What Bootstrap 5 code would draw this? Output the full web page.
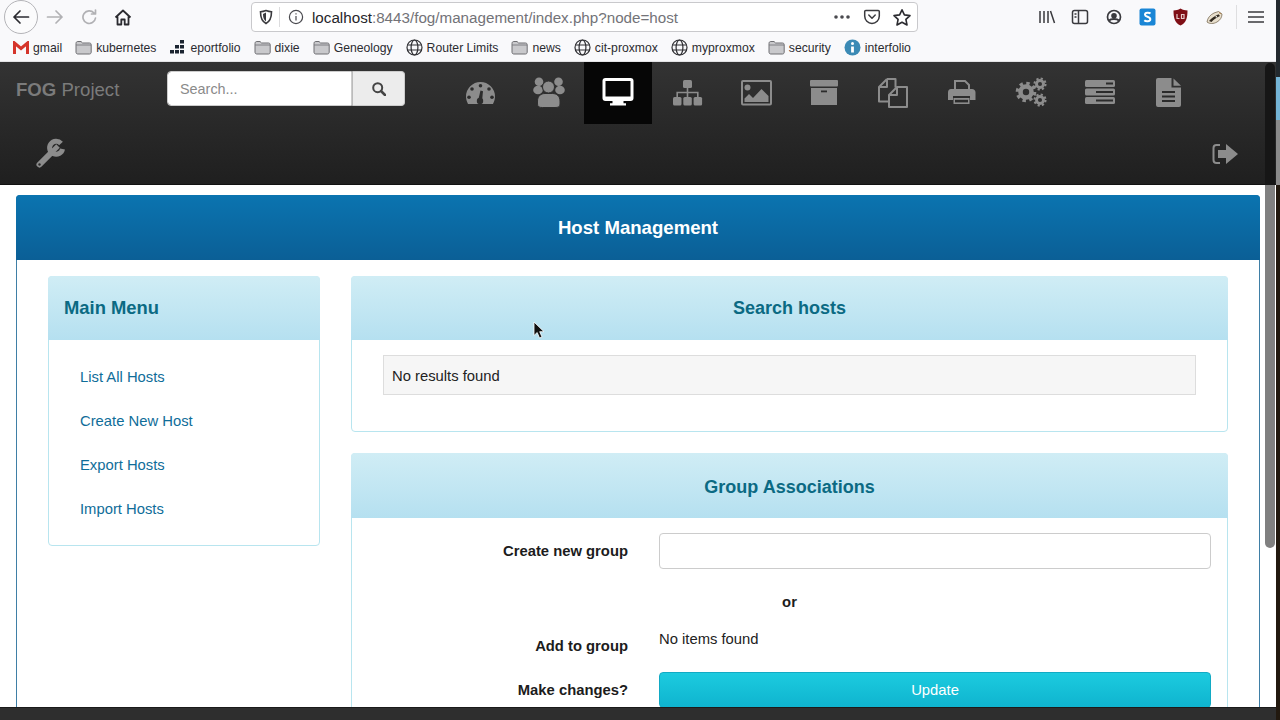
<!DOCTYPE html>
<html lang="en">
<head>
  <meta charset="UTF-8">
  <meta name="viewport" content="width=device-width, initial-scale=1.0">
  <title>FOG Project - Host Management</title>
  <link href="https://cdn.jsdelivr.net/npm/bootstrap@5.3.0/dist/css/bootstrap.min.css" rel="stylesheet">
  <style>
    html, body { height: 720px; overflow: hidden; }
    body { font-family: "Liberation Sans", Arial, sans-serif; font-size: 14.8px; color: #222; background: #fff; position: relative; }
    svg { display: block; flex: none; }

    /* browser chrome */
    .tool-row { height: 34px; background: #f9f9fb; padding-left: 4px; flex: none; }
    .back-circle { width: 34px; height: 34px; border: 1px solid #b4b4b8; border-radius: 50%; background: #fbfbfc; }
    .tool-btn { width: 34px; height: 34px; }
    .url-box { width: 667px; height: 30px; margin-left: 111px; margin-top: 2px; background: #fff; border: 1px solid #c9c9cc; border-radius: 4px; font-size: 15.2px; color: #737378; padding-left: 6px; padding-right: 5px; }
    .url-sep { width: 1px; height: 20px; background: #dcdcde; margin: 0 8px 0 5px; }
    .url-host { color: #26262a; }
    .url-text { padding-top: 2px; }
    .star-gap { margin-left: 11px; }
    .right-tools { margin-left: 112px; }
    .tool-cell { width: 33.5px; height: 34px; }
    .chrome-sep { width: 1px; height: 24px; background: #dedee0; margin: 0 11px 0 5px; }
    .marks-row { height: 28px; background: #f9f9fb; font-size: 12.2px; color: #2b2b30; padding: 1px 0 0 13px; border-bottom: 1px solid #e3e3e6; flex: none; }
    .mark-item { gap: 4px; margin-right: 13px; white-space: nowrap; }

    /* fog nav */
    .fog-nav { height: 123px; background: linear-gradient(#333 0%, #1f1f1f 100%); border-bottom: 1px solid #111; flex: none; }
    .fog-top { height: 62px; }
    .fog-brand { width: 167px; flex: none; padding-left: 16px; font-size: 18.6px; color: #7b7b7b; padding-bottom: 7px; }
    .fog-search { width: 238px; height: 35px; margin-top: 9px; flex: none; }
    .fog-search .form-control { height: 35px; font-size: 14.4px; border: 1px solid #ccc; border-radius: 4px 0 0 4px; color: #777; padding: 0 12px; }
    .fog-search .form-control::placeholder { color: #8a8a8a; }
    .fog-search .btn { width: 53px; height: 35px; background: #ececec; border: 1px solid #ccc; border-left: 1px solid #bbb; border-radius: 0 4px 4px 0; padding: 0; flex: none; }
    .fog-icons { margin-left: 41px; }
    .fog-cell { width: 68.8px; height: 62px; }
    .fog-cell.on { background: #060606; }
    .fog-bottom { height: 60px; padding: 0 42px 0 34px; }

    /* page */
    .page-wrap { flex: 1 1 auto; min-height: 0; overflow: hidden; padding: 10px 20px 0 16px; }
    .outer-panel { border: 1px solid #3f7fa6; border-bottom: 0; border-radius: 4px 4px 0 0; height: 600px; }
    .outer-head { height: 65px; margin: -1px -1px 0; padding-top: 1px; background: linear-gradient(#0b74b0, #0b5f96); border-radius: 4px 4px 0 0; color: #fff; font-size: 18.6px; font-weight: 700; }
    .outer-body { padding: 16px 31px 0; gap: 31px; }
    .side-col { width: 272px; flex: none; }
    .main-col { width: 877px; flex: none; }
    .soft-panel { border: 1px solid #b8e5ef; border-radius: 4px; background: #fff; }
    .soft-head { height: 64px; margin: -1px -1px 0; background: linear-gradient(#d0edf5, #b5e0f0); border-radius: 4px 4px 0 0; color: #0b6a83; font-size: 18px; font-weight: 700; }
    .side-title { font-size: 18.4px; }
    .side-link { display: block; height: 44px; line-height: 44px; padding-left: 31px; color: #0f6d99; text-decoration: none; }
    .side-list { padding: 15px 0 14px; }
    .empty-well { height: 40px; margin: 15px 31px 36px; background: #f6f6f6; border: 1px solid #ddd; padding: 2px 0 0 8px; }
    .second-panel { margin-top: 21px; height: 300px; }
    .second-panel .soft-head { height: 65px; padding-top: 3px; }
    .form-zone { padding: 15px 16px 0 0; }
    .lbl-col { width: 276px; flex: none; text-align: right; font-weight: 700; color: #1c1c1c; }
    .val-col { width: 552px; margin-left: 31px; flex: none; }
    .val-col .form-control { height: 36px; border: 1px solid #ccc; border-radius: 4px; }
    .or-line { height: 31px; margin: 18px -16px 1px 0; font-weight: 700; color: #1c1c1c; }
    .items-line { height: 53px; }
    .items-line .lbl-col { padding-top: 16px; }
    .items-line .val-col { padding-top: 9px; }
    .update-btn { display: block; width: 100%; height: 36px; padding: 0; color: #fff; font-size: 14.8px; border: 1px solid #12aac4; border-radius: 4px; background: linear-gradient(#1ccbdf, #0fb4cf); }

    /* bottom strip, scrollbar, pointer */
    .video-bar { height: 13px; background: #2e2e2e; border-top: 1px solid #1b1b1b; flex: none; }
    .scroll-lower { position: absolute; right: 5px; top: 185px; width: 10px; height: 363px; border-radius: 0 0 5px 5px; background: #808080; }
    .scroll-dark { position: absolute; right: 5px; top: 63px; width: 10px; height: 122px; border-radius: 5px 5px 0 0; background: #161616; }
    .edge-strip { position: absolute; right: 0; top: 0; width: 4px; height: 720px; background: linear-gradient(#23292e 0, #23292e 77px, #74b4d6 77px, #74b4d6 120px, #8a8a8a 120px, #8a8a8a 185px, #22190f 185px, #22190f 100%); }
    .pointer-mark { position: absolute; left: 533px; top: 321px; }
  </style>
</head>
<body class="d-flex flex-column">

  <svg width="0" height="0" class="position-absolute">
    <symbol id="ico-folder" viewBox="0 0 17 15">
      <path d="M1 3.500C1 2.300 1.600 1.500 2.800 1.500H6L7.600 3H14.500C15.600 3 16.200 3.700 16.200 4.800V12C16.200 13.200 15.600 14 14.500 14H2.800C1.600 14 1 13.200 1 12Z" fill="#c9c9cc" stroke="#6f6f73"/>
      <path d="M1.200 5H16" stroke="#6f6f73" stroke-width=".8"/>
    </symbol>
    <symbol id="ico-globe" viewBox="0 0 17 17">
      <g fill="none" stroke="#2f2f33" stroke-width="1.200"><circle cx="8.500" cy="8.500" r="7.500"/><ellipse cx="8.500" cy="8.500" rx="3.400" ry="7.500"/><path d="M1.500 6H15.500M1.500 11H15.500"/></g>
    </symbol>
    <symbol id="ico-gear" viewBox="-12 -12 24 24">
      <circle r="6" fill="none" stroke="#8c8c8c" stroke-width="5"/>
      <circle r="9.500" fill="none" stroke="#8c8c8c" stroke-width="3.500" stroke-dasharray="3.730 3.730"/>
    </symbol>
  </svg>

  <!-- browser toolbar -->
  <div class="tool-row d-flex">
    <div class="back-circle d-flex align-items-center justify-content-center">
      <svg width="18" height="16" viewBox="0 0 18 16" fill="none" stroke="#2b2b30" stroke-width="1.700" stroke-linecap="round" stroke-linejoin="round"><path d="M16.500 8H2M8 2L2 8L8 14"/></svg>
    </div>
    <div class="tool-btn d-flex align-items-center justify-content-center">
      <svg width="18" height="16" viewBox="0 0 18 16" fill="none" stroke="#b1b1b4" stroke-width="1.700" stroke-linecap="round" stroke-linejoin="round"><path d="M1.500 8H16M10 2L16 8L10 14"/></svg>
    </div>
    <div class="tool-btn d-flex align-items-center justify-content-center">
      <svg width="17" height="16" viewBox="0 0 17 16" fill="none" stroke="#b1b1b4" stroke-width="1.700" stroke-linecap="round" stroke-linejoin="round"><path d="M14.500 9A6.300 6.300 0 1 1 13 4M14.500 1V5H10.500"/></svg>
    </div>
    <div class="tool-btn d-flex align-items-center justify-content-center">
      <svg width="18" height="17" viewBox="0 0 18 17" fill="none" stroke="#2b2b30" stroke-width="1.800" stroke-linejoin="round"><path d="M1.500 8.500L9 1.500L16.500 8.500M3.500 7.500V15.500H7.300V10.500H10.700V15.500H14.500V7.500"/></svg>
    </div>
    <div class="url-box d-flex align-items-center">
      <svg width="16" height="16" viewBox="0 0 16 16" fill="none" stroke="#3a3a3e" stroke-width="1.600"><path d="M2.500 2.800C6 2.400 6.500 2 8 1.500C9.500 2 10 2.400 13.500 2.800C13.500 9 12 12.500 8 14.500C4 12.500 2.500 9 2.500 2.800Z"/><path d="M8 3.500V12.500C6 11 5 9 5 5Z" fill="#3a3a3e" stroke="none"/></svg>
      <span class="url-sep"></span>
      <svg width="16" height="16" viewBox="0 0 16 16" fill="none" stroke="#4a4a4f" stroke-width="1.200"><circle cx="8" cy="8" r="6.600"/><path d="M8 7V11.500M8 4.300V5.500"/></svg>
      <span class="url-text ms-2 flex-grow-1"><span class="url-host">localhost</span>:8443/fog/management/index.php?node=host</span>
      <svg class="me-2" width="18" height="6" viewBox="0 0 18 6" fill="#4a4a4f"><circle cx="3" cy="3" r="1.800"/><circle cx="9" cy="3" r="1.800"/><circle cx="15" cy="3" r="1.800"/></svg>
      <svg class="ms-1" width="18" height="18" viewBox="0 0 18 18" fill="none" stroke="#3a3a3e" stroke-width="1.500" stroke-linecap="round" stroke-linejoin="round"><path d="M2.800 2.500H15.200C15.900 2.500 16.300 3 16.300 3.600V8C16.300 12 13 15.500 9 15.500C5 15.500 1.700 12 1.700 8V3.600C1.700 3 2.100 2.500 2.800 2.500Z"/><path d="M5.800 7L9 10.200L12.200 7"/></svg>
      <svg class="star-gap" width="20" height="19" viewBox="0 0 20 19" fill="none" stroke="#2b2b30" stroke-width="1.600" stroke-linejoin="round"><path d="M10 1.800L12.400 6.900L18 7.600L13.900 11.400L15 17L10 14.200L5 17L6.100 11.400L2 7.600L7.600 6.900Z"/></svg>
    </div>
    <div class="right-tools d-flex align-items-center">
      <div class="tool-cell d-flex align-items-center justify-content-center">
        <svg width="18" height="16" viewBox="0 0 18 16" fill="none" stroke="#3a3a3e" stroke-width="1.500"><path d="M2 2V14M6 2V14M10 2V14M12.500 2L16.500 14"/></svg>
      </div>
      <div class="tool-cell d-flex align-items-center justify-content-center">
        <svg width="18" height="16" viewBox="0 0 18 16" fill="none" stroke="#3a3a3e" stroke-width="1.500"><rect x="1.500" y="1.500" width="15" height="13" rx="2"/><path d="M7.500 1.500V14.500M3.500 5H5.500M3.500 8H5.500"/></svg>
      </div>
      <div class="tool-cell d-flex align-items-center justify-content-center">
        <svg width="16" height="16" viewBox="0 0 16 16" fill="none" stroke="#3a3a3e" stroke-width="1.700"><circle cx="8" cy="8" r="6.500"/><circle cx="8" cy="6.800" r="2.800" fill="#3a3a3e" stroke="none"/><path d="M3 11.500C5 9.500 11 9.500 13 11.500" stroke-width="2"/></svg>
      </div>
      <div class="tool-cell d-flex align-items-center justify-content-center">
        <svg width="17" height="18" viewBox="0 0 17 18"><rect x=".5" y=".5" width="16" height="17" rx="2" fill="#1a86d6"/><path d="M11.500 5.500C10.500 4.500 6 4 6 6.700C6 9.300 11.300 8.300 11.300 11.200C11.300 13.800 6.500 13.500 5.300 12.300" fill="none" stroke="#fff" stroke-width="2"/></svg>
      </div>
      <div class="tool-cell d-flex align-items-center justify-content-center">
        <svg width="15" height="18" viewBox="0 0 15 18"><path d="M7.500 .5C10 2 12 2.300 14.500 2.500C14.500 10 13 15 7.500 17.500C2 15 .5 10 .5 2.500C3 2.300 5 2 7.500 .5Z" fill="#7f0f16"/><path d="M4 6V10.500H6.500M8.500 6.500H11V10.500H8.500Z" fill="none" stroke="#e8c9c9" stroke-width="1.200"/></svg>
      </div>
      <div class="tool-cell d-flex align-items-center justify-content-center">
        <svg width="17" height="15" viewBox="0 0 17 15"><path d="M1 12C1.500 8 4 5 8 3L12.500 1.500L16 4C16 7 14.500 10 11 12C7.500 14 3.500 14 1 12Z" fill="#e8dfcd" stroke="#6a5a42" stroke-width=".7"/><path d="M3 11C5.500 8.500 8.500 6 12.500 4.300L14 6C10.500 7.500 7.500 9.500 5.500 12Z" fill="#332b22"/><path d="M12.800 1.800L15.800 4L13.700 3.800Z" fill="#a8763c"/><circle cx="10.300" cy="6.800" r=".8" fill="#fff"/></svg>
      </div>
      <span class="chrome-sep"></span>
      <svg width="16" height="14" viewBox="0 0 16 14" stroke="#3a3a3e" stroke-width="1.600"><path d="M0 2H16M0 7H16M0 12H16"/></svg>
    </div>
  </div>

  <!-- bookmarks -->
  <div class="marks-row d-flex align-items-center">
    <div class="mark-item d-flex align-items-center">
      <svg width="16" height="13" viewBox="0 0 16 13" fill="none" stroke="#d5352b" stroke-width="3"><path d="M1.500 13V2L8 7.500L14.500 2V13"/></svg><span>gmail</span>
    </div>
    <div class="mark-item d-flex align-items-center"><svg width="17" height="15"><use href="#ico-folder"/></svg><span>kubernetes</span></div>
    <div class="mark-item d-flex align-items-center">
      <svg width="17" height="16" viewBox="0 0 17 16" fill="#1b2430"><rect x="11" y="0" width="4" height="3.500"/><rect x="11" y="5" width="4" height="3.500"/><rect x="6" y="5" width="4" height="3.500"/><rect x="1" y="10" width="4" height="3.500"/><rect x="6" y="10" width="4" height="3.500"/><rect x="11" y="10" width="4" height="3.500"/></svg><span>eportfolio</span>
    </div>
    <div class="mark-item d-flex align-items-center"><svg width="17" height="15"><use href="#ico-folder"/></svg><span>dixie</span></div>
    <div class="mark-item d-flex align-items-center"><svg width="17" height="15"><use href="#ico-folder"/></svg><span>Geneology</span></div>
    <div class="mark-item d-flex align-items-center"><svg width="17" height="17"><use href="#ico-globe"/></svg><span>Router Limits</span></div>
    <div class="mark-item d-flex align-items-center"><svg width="17" height="15"><use href="#ico-folder"/></svg><span>news</span></div>
    <div class="mark-item d-flex align-items-center"><svg width="17" height="17"><use href="#ico-globe"/></svg><span>cit-proxmox</span></div>
    <div class="mark-item d-flex align-items-center"><svg width="17" height="17"><use href="#ico-globe"/></svg><span>myproxmox</span></div>
    <div class="mark-item d-flex align-items-center"><svg width="17" height="15"><use href="#ico-folder"/></svg><span>security</span></div>
    <div class="mark-item d-flex align-items-center">
      <svg width="17" height="17" viewBox="0 0 17 17"><circle cx="8.500" cy="8.500" r="8" fill="#3b8ab5"/><circle cx="8.500" cy="4.500" r="1.500" fill="#fff"/><path d="M8.500 7.500V13.500" stroke="#fff" stroke-width="2.800"/></svg><span>interfolio</span>
    </div>
  </div>

  <!-- fog navigation -->
  <nav class="fog-nav">
    <div class="fog-top d-flex">
      <div class="fog-brand d-flex align-items-center"><span><b>FOG</b> Project</span></div>
      <form class="fog-search d-flex" onsubmit="return false">
        <input type="text" class="form-control" placeholder="Search...">
        <button class="btn d-flex align-items-center justify-content-center" type="button">
          <svg width="14" height="14" viewBox="0 0 14 14" fill="none" stroke="#444" stroke-width="2"><circle cx="5.700" cy="5.700" r="4.500"/><path d="M9 9L13 13" stroke-width="2.500" stroke-linecap="round"/></svg>
        </button>
      </form>
      <div class="fog-icons d-flex">
        <a class="fog-cell d-flex align-items-center justify-content-center" href="#">
          <svg width="32" height="32" viewBox="0 0 32 32"><path d="M4 27C2.500 24 2 21.500 2 19.500A14.500 14.500 0 0 1 31 19.500C31 21.500 30.500 24 29 27Z" fill="#8c8c8c"/><g fill="#2c2c2c"><circle cx="16.500" cy="8.700" r="1.800"/><circle cx="8" cy="12" r="1.800"/><circle cx="25" cy="12" r="1.800"/><circle cx="5" cy="20.300" r="1.800"/><circle cx="28" cy="20.300" r="1.800"/><circle cx="16" cy="24" r="3.200"/><path d="M16.500 13.500L19 14.200L18 24H14Z"/></g></svg>
        </a>
        <a class="fog-cell d-flex align-items-center justify-content-center" href="#">
          <svg width="32" height="32" viewBox="0 0 32 32" fill="#8c8c8c"><circle cx="6" cy="4.700" r="4.300"/><circle cx="25.500" cy="4.700" r="4.300"/><ellipse cx="5" cy="13" rx="4.800" ry="4.300"/><ellipse cx="27" cy="13" rx="4.800" ry="4.300"/><circle cx="15.500" cy="10" r="6" stroke="#2e2e2e"/><path d="M4.500 27V24C4.500 19 8 16.500 12 16.500H19.500C23.500 16.500 27 19 27 24V27C27 30 25 30.500 22 30.500H9.500C6.500 30.500 4.500 30 4.500 27Z" stroke="#2e2e2e"/></svg>
        </a>
        <a class="fog-cell on d-flex align-items-center justify-content-center" href="#">
          <svg width="32" height="32" viewBox="0 0 32 32"><rect x=".5" y="1" width="31" height="23" rx="3" fill="#fff"/><rect x="3.500" y="4" width="25" height="15.500" fill="#060606"/><path d="M10.500 24H21.500V26.200H24V28.500H8V26.200H10.500Z" fill="#fff"/></svg>
        </a>
        <a class="fog-cell d-flex align-items-center justify-content-center" href="#">
          <svg width="32" height="32" viewBox="0 0 32 32" fill="#8c8c8c"><rect x="12" y="3" width="9" height="8" rx="1.500"/><rect x="2" y="20" width="8.500" height="8.500" rx="1.500"/><rect x="12.300" y="20" width="8.500" height="8.500" rx="1.500"/><rect x="22.600" y="20" width="8.500" height="8.500" rx="1.500"/><path d="M16.500 10V20M6.200 20V15.500H26.800V20" fill="none" stroke="#8c8c8c" stroke-width="1.600"/></svg>
        </a>
        <a class="fog-cell d-flex align-items-center justify-content-center" href="#">
          <svg width="32" height="32" viewBox="0 0 32 32"><rect x="2" y="4" width="29" height="23.500" rx="1" fill="none" stroke="#8c8c8c" stroke-width="2"/><circle cx="7.500" cy="10.500" r="3" fill="#8c8c8c"/><path d="M4.500 25V21.500L9 17L13 21L21.500 12L28.500 19V25Z" fill="#8c8c8c"/></svg>
        </a>
        <a class="fog-cell d-flex align-items-center justify-content-center" href="#">
          <svg width="32" height="32" viewBox="0 0 32 32" fill="#8c8c8c"><rect x="2" y="3" width="28" height="6.500" rx="1"/><path d="M3 11H29V28H3Z"/><rect x="13" y="13.500" width="6" height="1.800" fill="#2b2b2b"/></svg>
        </a>
        <a class="fog-cell d-flex align-items-center justify-content-center" href="#">
          <svg width="32" height="32" viewBox="0 0 32 32" fill="none" stroke="#8c8c8c" stroke-width="2" stroke-linejoin="round"><path d="M10 2H18.500V10.500M10 2L2 10V24.500H12M10 2V10H2"/><path d="M20 10H30V30H12V18ZM20 10V18H12"/></svg>
        </a>
        <a class="fog-cell d-flex align-items-center justify-content-center" href="#">
          <svg width="32" height="32" viewBox="0 0 32 32"><path d="M9 13V4H19L23 8V13" fill="none" stroke="#8c8c8c" stroke-width="2"/><path d="M5 12H26C28 12 29.500 13.500 29.500 15.500V23H24V19H7V23H2V15.500C2 13.500 3 12 5 12Z" fill="#8c8c8c"/><rect x="7.500" y="21" width="16" height="6" fill="#8c8c8c"/><rect x="9" y="22.800" width="13" height="2.600" fill="#2b2b2b"/></svg>
        </a>
        <a class="fog-cell d-flex align-items-center justify-content-center" href="#">
          <svg width="32" height="32" viewBox="0 0 32 32"><use href="#ico-gear" x="0" y="4" width="22" height="22"/><use href="#ico-gear" x="18" y="0" width="14" height="14"/><use href="#ico-gear" x="18" y="16" width="14" height="14"/></svg>
        </a>
        <a class="fog-cell d-flex align-items-center justify-content-center" href="#">
          <svg width="32" height="32" viewBox="0 0 32 32"><g fill="#8c8c8c"><rect x="1" y="3" width="30" height="7" rx="1.500"/><rect x="1" y="11.500" width="30" height="7" rx="1.500"/><rect x="1" y="20" width="30" height="7" rx="1.500"/></g><g fill="#2b2b2b"><rect x="22" y="5.500" width="7" height="2"/><rect x="12" y="14" width="17" height="2"/><rect x="12" y="22.500" width="17" height="2"/></g></svg>
        </a>
        <a class="fog-cell d-flex align-items-center justify-content-center" href="#">
          <svg width="32" height="32" viewBox="0 0 32 32" fill="#8c8c8c"><path d="M4 3A2 2 0 0 1 6 1H19.500V10.500H29V28A2 2 0 0 1 27 30H6A2 2 0 0 1 4 28Z"/><path d="M21.500 1.500L29 8.700H21.500Z"/><g fill="#2b2b2b"><rect x="10" y="14" width="13" height="2"/><rect x="10" y="18.500" width="13" height="2"/><rect x="10" y="23" width="13" height="2"/></g></svg>
        </a>
      </div>
    </div>
    <div class="fog-bottom d-flex align-items-center justify-content-between">
      <a href="#"><svg width="32" height="32" viewBox="0 0 32 32"><path d="M5.500 26.500L18 14" stroke="#8c8c8c" stroke-width="6" stroke-linecap="round"/><path d="M27 5.500A6.500 6.500 0 1 0 28.500 11" fill="none" stroke="#8c8c8c" stroke-width="5"/><path d="M19 13L24 8" stroke="#8c8c8c" stroke-width="5"/><circle cx="5.500" cy="26.500" r="1.200" fill="#2b2b2b"/></svg></a>
      <a href="#"><svg width="26" height="22" viewBox="0 0 26 22"><path d="M8 2H4.500C2.500 2 1.500 3.200 1.500 5V17C1.500 18.800 2.500 20 4.500 20H8" fill="none" stroke="#8c8c8c" stroke-width="2"/><path d="M6 7H14V1L26 11L14 21V15H6Z" fill="#8c8c8c"/></svg></a>
    </div>
  </nav>

  <!-- page content -->
  <div class="page-wrap">
    <div class="outer-panel">
      <div class="outer-head d-flex align-items-center justify-content-center">Host Management</div>
      <div class="outer-body d-flex">
        <div class="side-col">
          <div class="soft-panel">
            <div class="soft-head side-title d-flex align-items-center ps-3">Main Menu</div>
            <div class="side-list">
              <a class="side-link" href="#">List All Hosts</a>
              <a class="side-link" href="#">Create New Host</a>
              <a class="side-link" href="#">Export Hosts</a>
              <a class="side-link" href="#">Import Hosts</a>
            </div>
          </div>
        </div>
        <div class="main-col">
          <div class="soft-panel">
            <div class="soft-head d-flex align-items-center justify-content-center">Search hosts</div>
            <div class="empty-well d-flex align-items-center">No results found</div>
          </div>
          <div class="soft-panel second-panel">
            <div class="soft-head d-flex align-items-center justify-content-center">Group Associations</div>
            <form class="form-zone" onsubmit="return false">
              <div class="d-flex align-items-center">
                <label class="lbl-col" for="newGroup">Create new group</label>
                <div class="val-col"><input type="text" class="form-control" id="newGroup"></div>
              </div>
              <div class="or-line d-flex align-items-center justify-content-center">or</div>
              <div class="items-line d-flex">
                <div class="lbl-col">Add to group</div>
                <div class="val-col">No items found</div>
              </div>
              <div class="d-flex align-items-center">
                <div class="lbl-col">Make changes?</div>
                <div class="val-col"><button class="update-btn" type="button">Update</button></div>
              </div>
            </form>
          </div>
        </div>
      </div>
    </div>
  </div>

  <div class="video-bar"></div>

  <div class="scroll-dark"></div>
  <div class="scroll-lower"></div>
  <div class="edge-strip"></div>
  <svg class="pointer-mark" width="12" height="18" viewBox="0 0 12 18"><path d="M1 1V14.500L4.200 11.500L6.500 17L9 16L6.700 10.700H11Z" fill="#111" stroke="#fff" stroke-width=".8"/></svg>

</body>
</html>
